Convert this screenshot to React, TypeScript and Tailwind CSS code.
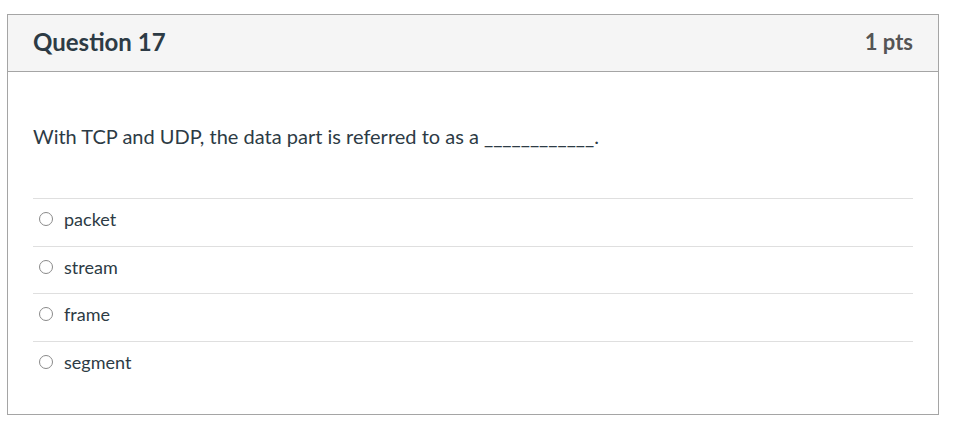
const answers = ["packet", "stream", "frame", "segment"];

export default function App() {
  return (
    <div className="min-h-screen bg-white pl-[7px] pt-[14px] font-['Lato','Liberation_Sans',sans-serif] text-[#2d3b45]">
      <div className="w-[932px] border border-[#a5a5a5] bg-white">
        <div className="flex h-[57px] items-center justify-between border-b border-[#a5a5a5] bg-[#f5f5f5] px-[25px] pb-[2px]">
          <h2 className="text-[24px] font-bold leading-none">Question 17</h2>
          <span className="text-[22px] font-bold leading-none text-[#555]">1 pts</span>
        </div>
        <div className="px-[25px] pb-[26px] pt-[49px]">
          <p className="text-[20px] leading-[30px]">
            With TCP and UDP, the data part is referred to as a ____________.
          </p>
          <div className="mt-[47px]">
            {answers.map((a) => (
              <div key={a} className="flex h-[47.5px] items-center border-t border-[#dfdfdf] pb-[6px]">
                <span className="ml-[6px] h-[14px] w-[14px] rounded-full border border-[#8a8a8a]" />
                <span className="ml-[11px] text-[18px] leading-6">{a}</span>
              </div>
            ))}
          </div>
        </div>
      </div>
    </div>
  );
}
